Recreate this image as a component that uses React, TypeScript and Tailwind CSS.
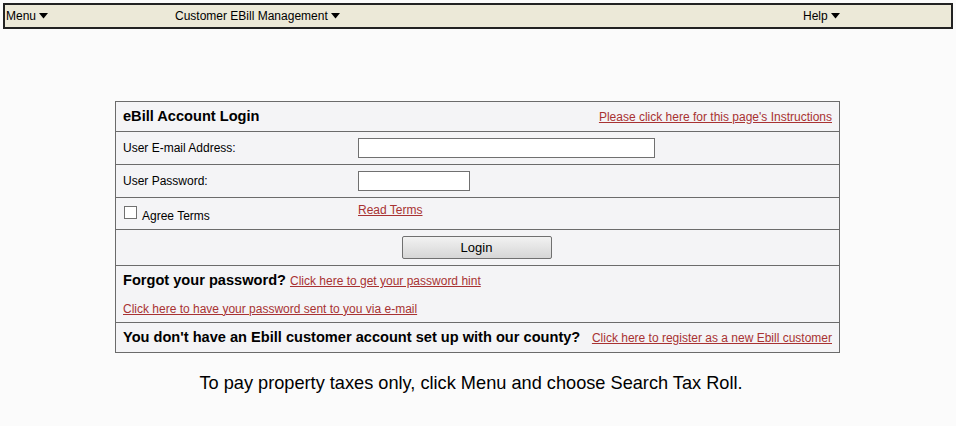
const Caret = () => (
  <svg width="9" height="6" viewBox="0 0 9 6" className="inline-block ml-[3px]">
    <polygon points="0,0 9,0 4.5,5.5" fill="#000" />
  </svg>
);

const linkCls = "text-[#a83232] underline text-[12px] cursor-pointer whitespace-nowrap";

const App = () => {
  return (
    <div className="w-[956px] h-[426px] bg-[#fbfbfb] font-['Liberation_Sans',Arial,sans-serif] text-black overflow-hidden">
      {/* top menu bar */}
      <div className="pt-[3px] px-[3px]">
        <div className="h-[26px] w-[950px] border-2 border-[#222] bg-[#ece9d8] flex items-center text-[12px]">
          <div className="w-[170px] pl-[1px] flex items-center">
            Menu <Caret />
          </div>
          <div className="w-[628px] flex items-center">
            Customer EBill Management <Caret />
          </div>
          <div className="flex items-center">
            Help <Caret />
          </div>
        </div>
      </div>

      {/* login table */}
      <div className="mt-[72px] ml-[115px] w-[725px] border border-[#6b6b6b] bg-[#f4f4f6]">
        <div className="h-[30px] border-b border-[#6b6b6b] flex items-center justify-between pl-[7px] pr-[7px]">
          <span className="font-bold text-[14.6px] whitespace-nowrap">eBill Account Login</span>
          <span className={linkCls}>Please click here for this page's Instructions</span>
        </div>
        <div className="h-[33px] border-b border-[#6b6b6b] flex items-center text-[12px]">
          <div className="w-[242px] pl-[7px]">User E-mail Address:</div>
          <input className="w-[297px] h-[20px] border border-[#707070] bg-white outline-none" />
        </div>
        <div className="h-[33px] border-b border-[#6b6b6b] flex items-center text-[12px]">
          <div className="w-[242px] pl-[7px]">User Password:</div>
          <input type="password" className="w-[112px] h-[20px] border border-[#707070] bg-white outline-none" />
        </div>
        <div className="h-[32px] border-b border-[#6b6b6b] flex text-[12px]">
          <div className="w-[242px] pl-[8px] pt-[8px] flex items-start">
            <span className="inline-block w-[13px] h-[13px] border border-[#707070] bg-white mr-[5px]" />
            <span className="mt-[1px]">Agree Terms</span>
          </div>
          <div className="pt-[3px]">
            <span className={linkCls}>Read Terms</span>
          </div>
        </div>
        <div className="h-[36px] border-b border-[#6b6b6b] flex items-center justify-center">
          <button className="w-[150px] h-[23px] border border-[#707070] rounded-[2px] bg-gradient-to-b from-[#f2f2f2] to-[#d6d6d6] text-[13px] ml-[-2px]">
            Login
          </button>
        </div>
        <div className="h-[57px] border-b border-[#6b6b6b] pl-[7px] pt-[4px]">
          <div className="flex items-baseline">
            <span className="font-bold text-[14.6px] mr-[4px] whitespace-nowrap">Forgot your password?</span>
            <span className={linkCls}>Click here to get your password hint</span>
          </div>
          <div className="mt-[8px] leading-[16px]">
            <span className={linkCls}>Click here to have your password sent to you via e-mail</span>
          </div>
        </div>
        <div className="h-[29px] flex items-center justify-between pl-[7px] pr-[7px]">
          <span className="font-bold text-[14.6px] whitespace-nowrap">You don't have an Ebill customer account set up with our county?</span>
          <span className={linkCls}>Click here to register as a new Ebill customer</span>
        </div>
      </div>

      <div className="mt-[17px] w-[956px] text-center text-[18.2px] pr-[14px]">
        To pay property taxes only, click Menu and choose Search Tax Roll.
      </div>
    </div>
  );
};

export default App;
